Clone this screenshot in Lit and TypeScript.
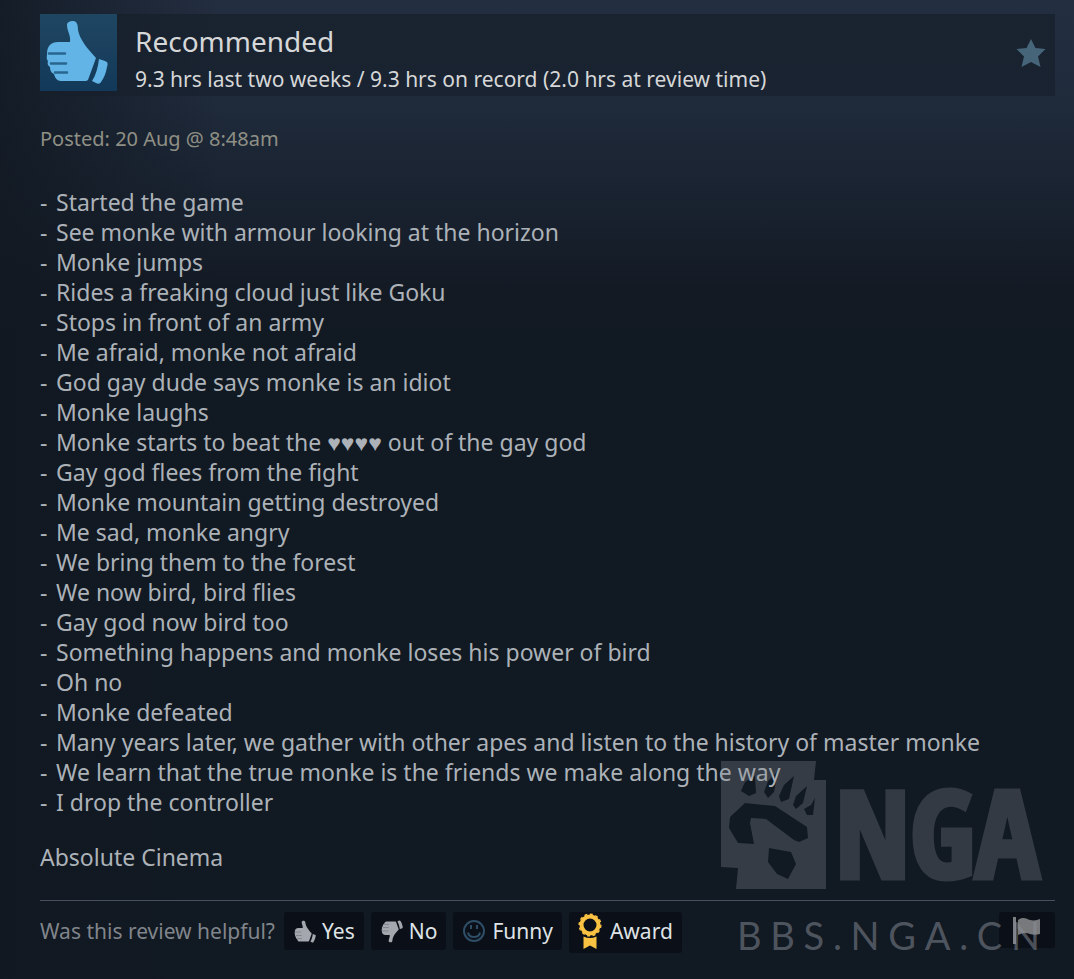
import { LitElement, html, css, svg } from "lit";
import { customElement } from "lit/decorators.js";

const LINES = [
  "Started the game",
  "See monke with armour looking at the horizon",
  "Monke jumps",
  "Rides a freaking cloud just like Goku",
  "Stops in front of an army",
  "Me afraid, monke not afraid",
  "God gay dude says monke is an idiot",
  "Monke laughs",
  "Monke starts to beat the ♥♥♥♥ out of the gay god",
  "Gay god flees from the fight",
  "Monke mountain getting destroyed",
  "Me sad, monke angry",
  "We bring them to the forest",
  "We now bird, bird flies",
  "Gay god now bird too",
  "Something happens and monke loses his power of bird",
  "Oh no",
  "Monke defeated",
  "Many years later, we gather with other apes and listen to the history of master monke",
  "We learn that the true monke is the friends we make along the way",
  "I drop the controller",
];

// Fist, finger gaps and cuff, on a 77 unit grid.
const hand = svg`
  <path d="M33 7c4 0 5 4 5 9 2 10 9 18 18 28l-8 22c-1 1-3 1-5 1H21c-4 0-6-3-7-7-3-1-4-4-4-7-2-1-3-3-2-6-2-2-1-5-1-7 0-8 4-12 11-12h12c1-7-3-11-3-17 0-3 3-4 6-4z"/>
  <path d="M59 45l6 2c3 1 3 3 2 6-1 6-3 11-6 15-1 2-3 2-5 1l-4-2c4-6 6-14 7-22z"/>`;
const gaps = svg`<path d="M9 39.500h16M11 49.500h15M15 58.500h12" fill="none" stroke-width="2.500" stroke-linecap="round"/>`;

@customElement("app-root")
export class AppRoot extends LitElement {
  static styles = css`
    :host {
      display: block;
      position: relative;
      box-sizing: border-box;
      min-height: 100vh;
      padding: 14px 19px 24px 40px;
      overflow: hidden;
      color: #acb2b8;
      font-family: "Noto Sans", "Open Sans", sans-serif;
      font-size: 23px;
      line-height: 30px;
      background:
        linear-gradient(90deg, rgba(17, 24, 33, 0.8) 0, rgba(17, 24, 33, 0) 220px),
        linear-gradient(180deg, #232e41 0, #1f2a3b 100px, #1a2432 180px, #131a24 290px, #111922 340px);
    }
    .head {
      display: flex;
      align-items: flex-start;
      min-height: 81px;
      background: linear-gradient(180deg, rgba(22, 32, 42, 0.75), rgba(22, 30, 42, 0.6));
    }
    .thumb {
      flex: none;
      width: 77px;
      height: 77px;
      background: linear-gradient(180deg, #1f4661, #13395a);
      fill: #62b4e6;
      stroke: #286690;
    }
    .titles { flex: 1; padding: 6px 0 0 18px; }
    .title {
      margin: 0;
      color: #d6d7d8;
      font-size: 28px;
      font-weight: 400;
      line-height: 43px;
    }
    .hours { margin: 0; color: #d6d7d8; font-size: 21px; line-height: 33px; }
    .star { width: 30px; height: 30px; margin: 24px 9px 0 0; fill: #466579; }
    .posted { margin: 28px 0 0; color: #8f9085; font-size: 20px; }
    .list { margin: 33px 0 0; padding: 0; list-style: none; }
    .list li { display: flex; }
    .dash { flex: none; width: 16px; }
    .closing { margin: 25px 0 0; }
    .foot {
      display: flex;
      align-items: flex-start;
      gap: 7px;
      margin-top: 28px;
      padding-top: 11px;
      border-top: 1px solid #47505e;
    }
    .ask { margin-right: 2px; color: #80858b; font-size: 21px; line-height: 38px; }
    button {
      display: flex;
      align-items: center;
      gap: 4px;
      height: 38px;
      padding: 0 9px;
      border: 0;
      border-radius: 3px;
      background: #0b0f17;
      color: #dfe3e6;
      font: inherit;
      font-size: 21px;
    }
    .vote { width: 25px; height: 25px; fill: #a4a8ae; stroke: #7c8088; }
    .hand path { stroke-width: 0; }
    .smile { width: 24px; height: 24px; margin-right: 2px; }
    .medal { width: 24px; height: 36px; margin-right: 4px; }
    .award { height: 41px; padding-bottom: 3px; }
    .report { margin-left: auto; width: 56px; height: 36px; padding: 0 13px; }
    .flag { width: 30px; height: 30px; }
    .mark {
      position: absolute;
      right: 34px;
      top: 761px;
      width: 319px;
      pointer-events: none;
    }
    .logo { display: flex; align-items: flex-start; gap: 9px; }
    .paw { flex: none; width: 105px; height: 128px; fill: rgba(130, 136, 142, 0.32); }
    .nga {
      color: #343a43;
      font-family: "Liberation Sans Narrow", "Open Sans Condensed", "Liberation Sans", sans-serif;
      font-size: 120px;
      font-weight: 700;
      line-height: 142px;
      -webkit-text-stroke: 5px #343a43;
    }
    .site {
      display: flex;
      justify-content: space-between;
      margin: 8px 0 0 16px;
      color: rgba(140, 144, 154, 0.5);
      font-family: Lato, sans-serif;
      font-size: 38px;
      line-height: 48px;
    }
  `;

  render() {
    return html`
      <header class="head">
        <svg class="thumb" viewBox="0 0 77 77" aria-hidden="true"><g class="hand">${hand}</g>${gaps}</svg>
        <div class="titles">
          <h1 class="title">Recommended</h1>
          <p class="hours">9.3 hrs last two weeks / 9.3 hrs on record (2.0 hrs at review time)</p>
        </div>
        <svg class="star" viewBox="0 0 30 30" aria-hidden="true">
          <path d="M15 1l4.500 9 10 1-7.500 7.500 2.500 10.500-9.500-5-9.500 5L8 18.500.500 11l10-1z" />
        </svg>
      </header>
      <p class="posted">Posted: 20 Aug @ 8:48am</p>
      <ul class="list">
        ${LINES.map((line) => html`<li><span class="dash">-</span><span>${line}</span></li>`)}
      </ul>
      <p class="closing">Absolute Cinema</p>
      <footer class="foot">
        <span class="ask">Was this review helpful?</span>
        <button type="button">
          <svg class="vote" viewBox="2 2 72 72" aria-hidden="true"><g class="hand">${hand}</g>${gaps}</svg>Yes
        </button>
        <button type="button">
          <svg class="vote" viewBox="2 2 72 72" aria-hidden="true">
            <g transform="matrix(1 0 0 -1 0 76)"><g class="hand">${hand}</g>${gaps}</g></svg>No
        </button>
        <button type="button">
          <svg class="smile" viewBox="0 0 24 24" fill="none" stroke="#2d4e66" stroke-width="2" aria-hidden="true">
            <circle cx="12" cy="12" r="10" />
            <path d="M6 13.500c1 6 11 6 12 0M9 6v4M15 6v4" />
          </svg>Funny
        </button>
        <button type="button" class="award">
          <svg class="medal" viewBox="0 0 24 36" fill="#f9c243" aria-hidden="true">
            <circle cx="12" cy="12" r="8.500" fill="none" stroke="#f9c243" stroke-width="4" />
            <circle cx="12" cy="12" r="10.800" fill="none" stroke="#f9c243" stroke-width="1.500" stroke-dasharray="3 2.600" />
            <path d="M5.500 23.500q6.500 3 13 0V36L12 32.500 5.500 36z" />
          </svg>Award
        </button>
        <button type="button" class="report" aria-label="Report">
          <svg class="flag" viewBox="0 0 30 30" aria-hidden="true">
            <path d="M1 2h3v27H1z" fill="#7c7f84" />
            <path d="M6 5c5-4 9-1 12 0 4 1 7 0 10-1v15c-4 1-7 1-10 0-4-2-8-1-12 1z" fill="#77797c" />
          </svg>
        </button>
      </footer>
      <div class="mark">
        <div class="logo">
          <svg class="paw" viewBox="0 0 105 128" aria-hidden="true">
            <path
              fill-rule="evenodd"
              d="M0 0H95L93 19H105V128H15L17 107 0 106zM34 15L35 32 28 35 20 30 24 21zM57 10L53 31 47 37 43 31 47 20zM73 15L68 38 60 41 58 35 63 24zM86 25L82 42 75 48 72 44 75 35zM94 37L92 54 86 54 83 48 90 44zM24 42L54 45 86 66 87 77 78 81 73 79 45 58 30 57 29 62 33 83 17 82 8 67 9 56zM48 87L70 91 75 103 67 118 56 113 47 101z"
            />
          </svg>
          <span class="nga">NGA</span>
        </div>
        <div class="site" role="img" aria-label="BBS.NGA.CN">
          ${[..."BBS.NGA.CN"].map((c) => html`<span>${c}</span>`)}
        </div>
      </div>
    `;
  }
}
